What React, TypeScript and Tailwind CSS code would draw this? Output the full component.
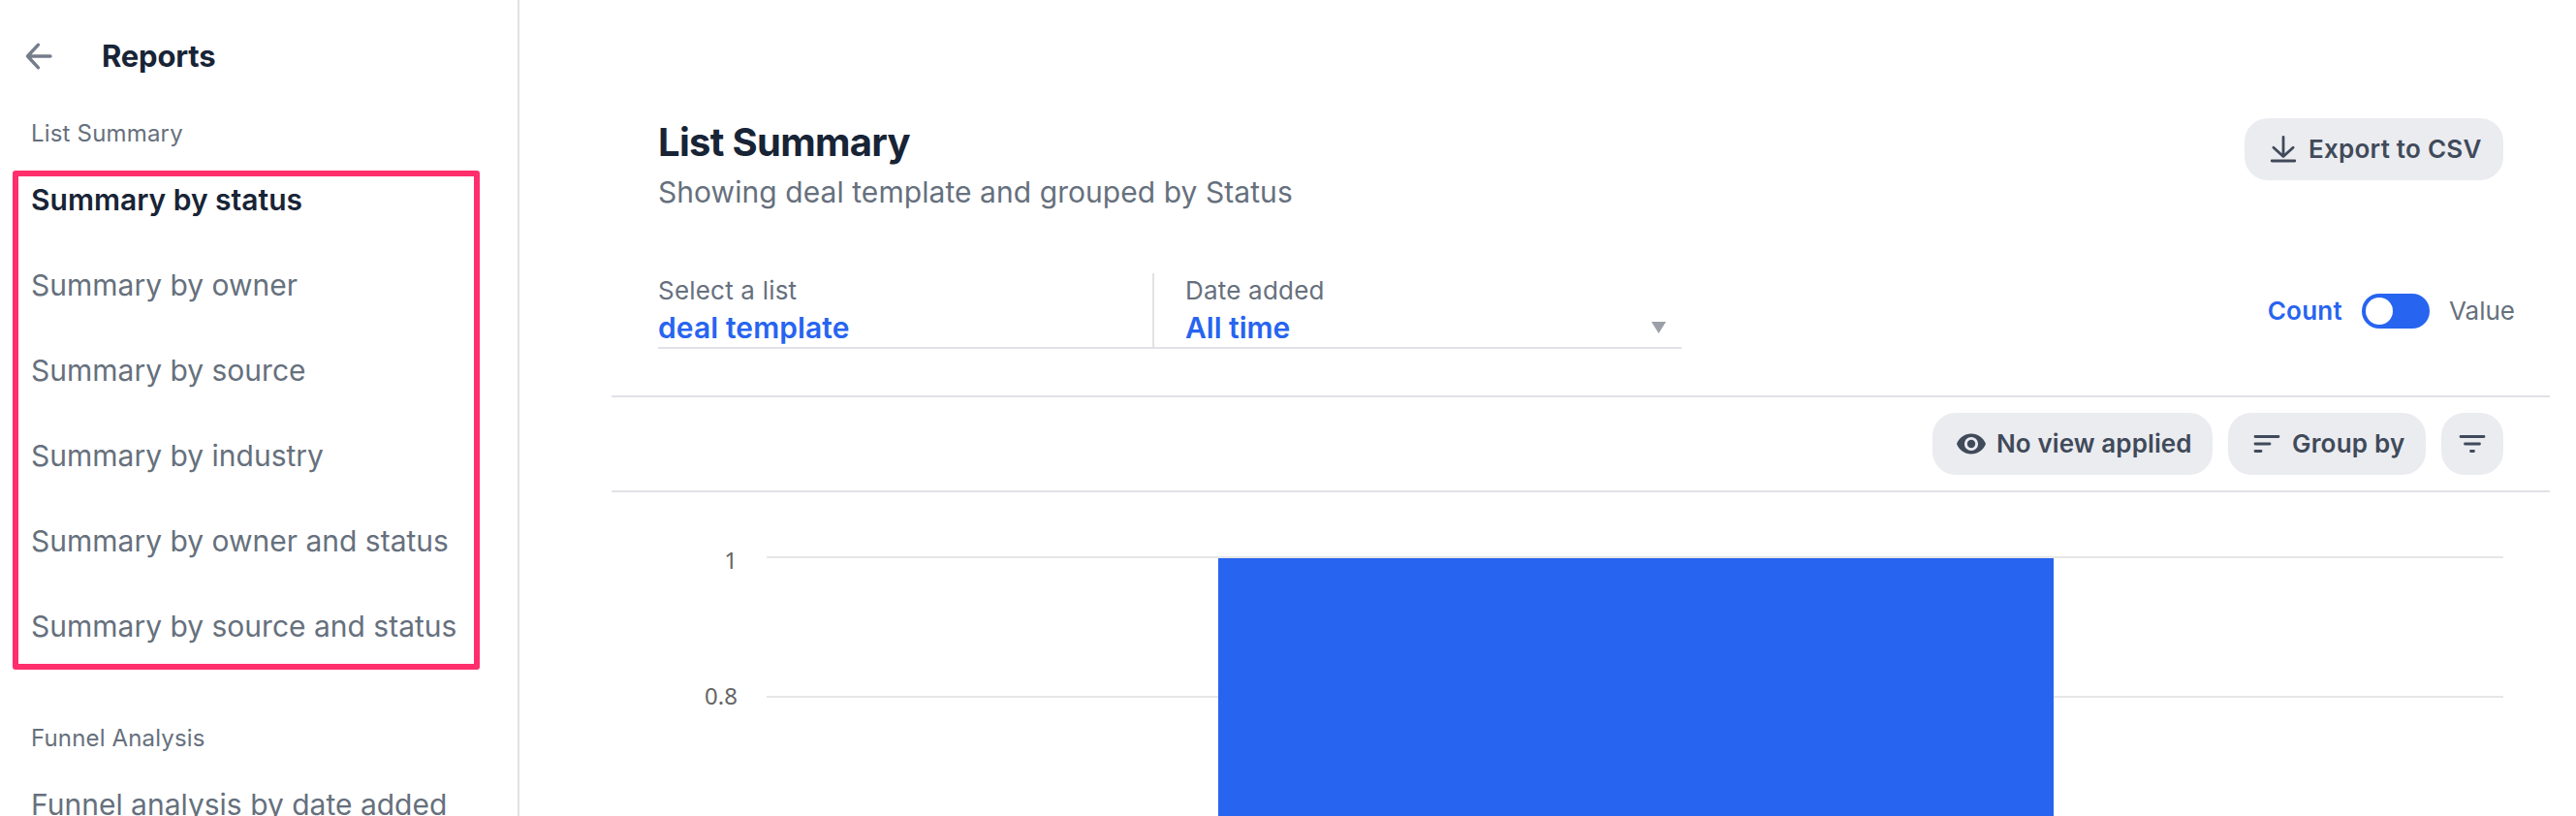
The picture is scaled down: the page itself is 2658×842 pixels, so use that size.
import type { ReactNode } from "react";

const summaryReports = [
  "Summary by status",
  "Summary by owner",
  "Summary by source",
  "Summary by industry",
  "Summary by owner and status",
  "Summary by source and status",
];

function ArrowLeftIcon() {
  return (
    <svg className="h-8 w-8 text-[#757d8b]" viewBox="0 0 32 32" fill="none" stroke="currentColor" strokeWidth="3.4" strokeLinecap="round" strokeLinejoin="round">
      <path d="M28 16H4.5M15.5 4.2L4.5 16l11 11.8" />
    </svg>
  );
}

function DownloadIcon() {
  return (
    <svg className="h-8 w-8" viewBox="0 0 32 32" fill="none" stroke="currentColor" strokeWidth="2.8" strokeLinecap="round" strokeLinejoin="round">
      <path d="M16 3.4v20M5.9 14.2L16 23.6l10.1-9.4" />
      <path d="M4.2 28h23.6" />
    </svg>
  );
}

function EyeIcon() {
  return (
    <svg className="h-8 w-8" viewBox="0 0 32 32" fill="currentColor">
      <path
        fillRule="evenodd"
        d="M16 5.500C9 5.500 3.300 9.900 1 16c2.300 6.100 8 10.500 15 10.500s12.700-4.400 15-10.500C28.700 9.900 23 5.500 16 5.500zm0 17.600a7.100 7.100 0 1 1 0-14.200 7.100 7.100 0 0 1 0 14.200zm0-11.300a4.200 4.200 0 1 0 0 8.400 4.200 4.200 0 0 0 0-8.400z"
      />
    </svg>
  );
}

function SortIcon() {
  return (
    <svg className="h-8 w-8" viewBox="0 0 32 32" fill="none" stroke="currentColor" strokeWidth="2.8" strokeLinecap="round">
      <path d="M4 8.500h24M4 16h15M4 23.500h6" />
    </svg>
  );
}

function FilterIcon() {
  return (
    <svg className="h-8 w-8" viewBox="0 0 32 32" fill="none" stroke="currentColor" strokeWidth="2.8" strokeLinecap="round">
      <path d="M4 8.500h24M8.500 16h15M14.500 23.500h3" />
    </svg>
  );
}

function Button({ className, icon, children }: { className: string; icon: ReactNode; children?: ReactNode }) {
  return (
    <button
      className={`flex h-16 shrink-0 items-center gap-2.5 whitespace-nowrap rounded-3xl bg-[#ebecf0] text-[26px] font-semibold text-[#404a5a] ${className}`}
    >
      {icon}
      {children && <span className="pb-0.5">{children}</span>}
    </button>
  );
}

function Sidebar() {
  return (
    <aside className="w-[536px] shrink-0 border-r-2 border-[#e1e2e7] text-[#66707d]">
      <div className="flex h-[116px] items-center gap-[49px] pl-6">
        <ArrowLeftIcon />
        <h1 className="text-[31px] font-bold tracking-[-0.2px] text-[#182436]">Reports</h1>
      </div>
      <p className="h-[60px] pl-8 pt-[5px] text-2xl leading-[34px] tracking-[0.18px]">List Summary</p>
      <ul className="ml-[13px] h-[515px] w-[482px] rounded-[3px] border-6 border-[#ff2e6c] pl-[13px]">
        {summaryReports.map((name, i) => (
          <li
            key={name}
            className={`flex h-[88px] items-start whitespace-nowrap pt-1.5 text-[30px] leading-9 ${
              i === 0 ? "font-semibold text-[#182436]" : ""
            }`}
          >
            {name}
          </li>
        ))}
      </ul>
      <p className="mt-[54px] pl-8 text-2xl leading-[34px] tracking-[0.15px]">Funnel Analysis</p>
      <p className="mt-[33px] whitespace-nowrap pl-8 text-[30px] leading-9">Funnel analysis by date added</p>
    </aside>
  );
}

function Filters() {
  return (
    <div className="flex h-[78px] w-[1056px] border-b-2 border-[#e1e2e7]">
      <div className="w-[512px] border-r-2 border-[#e1e2e7]">
        <p className="pt-0.5 text-[26px] leading-8 tracking-[0.2px]">Select a list</p>
        <p className="pt-1 text-[30px] font-semibold leading-9 tracking-[0.1px] text-[#2764f0]">deal template</p>
      </div>
      <div className="flex flex-1 items-end justify-between pl-8 pr-4">
        <div className="h-full">
          <p className="pt-0.5 text-[26px] leading-8 tracking-[0.2px]">Date added</p>
          <p className="pt-1 text-[30px] font-semibold leading-9 text-[#2764f0]">All time</p>
        </div>
        <svg className="mb-3.5 h-3 w-[15px]" viewBox="0 0 15 12" fill="#9b9fa8">
          <path d="M0 0h15L7.500 12z" />
        </svg>
      </div>
    </div>
  );
}

function Toggle() {
  return (
    <div className="flex items-center gap-5 text-[26px]">
      <span className="font-semibold tracking-[0.25px] text-[#2764f0]">Count</span>
      <span className="flex h-9 w-[70px] items-center rounded-full bg-[#2764f0] pl-1">
        <span className="h-7 w-7 rounded-full bg-white" />
      </span>
      <span>Value</span>
    </div>
  );
}

function Chart() {
  return (
    <div className="flex h-[334px] overflow-hidden pl-12 pt-[66px]">
      <div className="flex w-[82px] flex-col items-end font-['Noto_Sans',sans-serif] text-2xl leading-7 text-[#666]">
        <span className="-mt-2.5">1</span>
        <span className="mt-28">0.8</span>
      </div>
      <div className="ml-[30px] h-full w-[1792px]">
        <div className="h-0.5 bg-[#e6e6e6]" />
        <div className="flex h-full">
          <div className="h-36 w-[466px] border-b-2 border-[#e6e6e6]" />
          <div className="h-full w-[862px] bg-[#2764f0]" />
          <div className="h-36 flex-1 border-b-2 border-[#e6e6e6]" />
        </div>
      </div>
    </div>
  );
}

export default function App() {
  return (
    <div className="flex h-[842px] w-[2658px] overflow-hidden bg-white font-['Inter',sans-serif]">
      <Sidebar />
      <main className="ml-[95px] w-[2000px] text-[#66707d]">
        <header className="flex h-[282px] justify-between px-12 pt-[122px]">
          <div>
            <h2 className="pt-px text-[40px] font-bold leading-[48px] tracking-[-0.7px] text-[#182436]">List Summary</h2>
            <p className="mt-[9px] text-[30px] leading-9 tracking-[0.06px]">Showing deal template and grouped by Status</p>
          </div>
          <Button className="w-[267px] pl-6 tracking-[0.25px]" icon={<DownloadIcon />}>
            Export to CSV
          </Button>
        </header>
        <section className="flex h-[126px] justify-between pl-12 pr-9">
          <Filters />
          <div className="pt-[19px]">
            <Toggle />
          </div>
        </section>
        <div className="flex h-[100px] items-center justify-end gap-4 border-y-2 border-[#e1e2e7] pr-12">
          <Button className="w-[289px] pl-6 tracking-[0.1px]" icon={<EyeIcon />}>
            No view applied
          </Button>
          <Button className="w-[204px] pl-6 tracking-[0.2px]" icon={<SortIcon />}>
            Group by
          </Button>
          <Button className="w-16 justify-center" icon={<FilterIcon />} />
        </div>
        <Chart />
      </main>
    </div>
  );
}
